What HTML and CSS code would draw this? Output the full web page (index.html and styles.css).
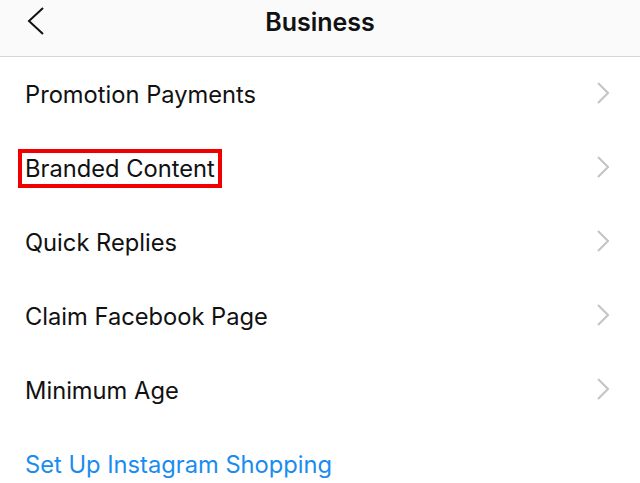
FILE: index.html
```html
<!DOCTYPE html>
<html>
<head>
    <title>Business</title>
    <meta name="viewport" content="width=device-width, initial-scale=1">
    <link rel="stylesheet" href="styles.css">
</head>
<body>
    <div class="header">
        <svg class="back" width="20" height="28" viewBox="0 0 20 28">
            <polyline points="17,1 3,14 17,27" fill="none" stroke="#111" stroke-width="2"/>
        </svg>
        <h1>Business</h1>
    </div>

    <div class="list">
        <div class="row">
            <span>Promotion Payments</span>
            <svg class="chev" width="12" height="22" viewBox="0 0 12 22"><polyline points="1,1 11,11 1,21" fill="none" stroke="#c4c4c4" stroke-width="2"/></svg>
        </div>
        <div class="row">
            <span class="marked">Branded Content</span>
            <svg class="chev" width="12" height="22" viewBox="0 0 12 22"><polyline points="1,1 11,11 1,21" fill="none" stroke="#c4c4c4" stroke-width="2"/></svg>
        </div>
        <div class="row">
            <span>Quick Replies</span>
            <svg class="chev" width="12" height="22" viewBox="0 0 12 22"><polyline points="1,1 11,11 1,21" fill="none" stroke="#c4c4c4" stroke-width="2"/></svg>
        </div>
        <div class="row">
            <span>Claim Facebook Page</span>
            <svg class="chev" width="12" height="22" viewBox="0 0 12 22"><polyline points="1,1 11,11 1,21" fill="none" stroke="#c4c4c4" stroke-width="2"/></svg>
        </div>
        <div class="row">
            <span>Minimum Age</span>
            <svg class="chev" width="12" height="22" viewBox="0 0 12 22"><polyline points="1,1 11,11 1,21" fill="none" stroke="#c4c4c4" stroke-width="2"/></svg>
        </div>
        <div class="row link">
            <span>Set Up Instagram Shopping</span>
        </div>
    </div>
</body>
</html>
```

FILE: styles.css
```css
body {
    margin: 0;
    background: #fff;
    font-family: Inter, "Liberation Sans", sans-serif;
    color: #111;
    overflow: hidden;
}

.header {
    height: 56px;
    background: #fafafa;
    border-bottom: 1px solid #d6d6d6;
    display: flex;
    align-items: center;
    justify-content: center;
    position: relative;
}

.header h1 {
    margin: 0;
    font-size: 25px;
    font-weight: 600;
    margin-top: -12px;
}

.back {
    position: absolute;
    left: 26px;
    top: 7px;
}

.row {
    height: 74px;
    display: flex;
    align-items: center;
    justify-content: space-between;
    padding: 0 31px 0 25px;
    font-size: 23.7px;
}

.marked {
    border: 4px solid #f00000;
    padding: 1px 3px;
    margin-left: -7px;
}

.chev {
    margin-top: -2px;
}

.link {
    color: #1a8cf0;
}
```
